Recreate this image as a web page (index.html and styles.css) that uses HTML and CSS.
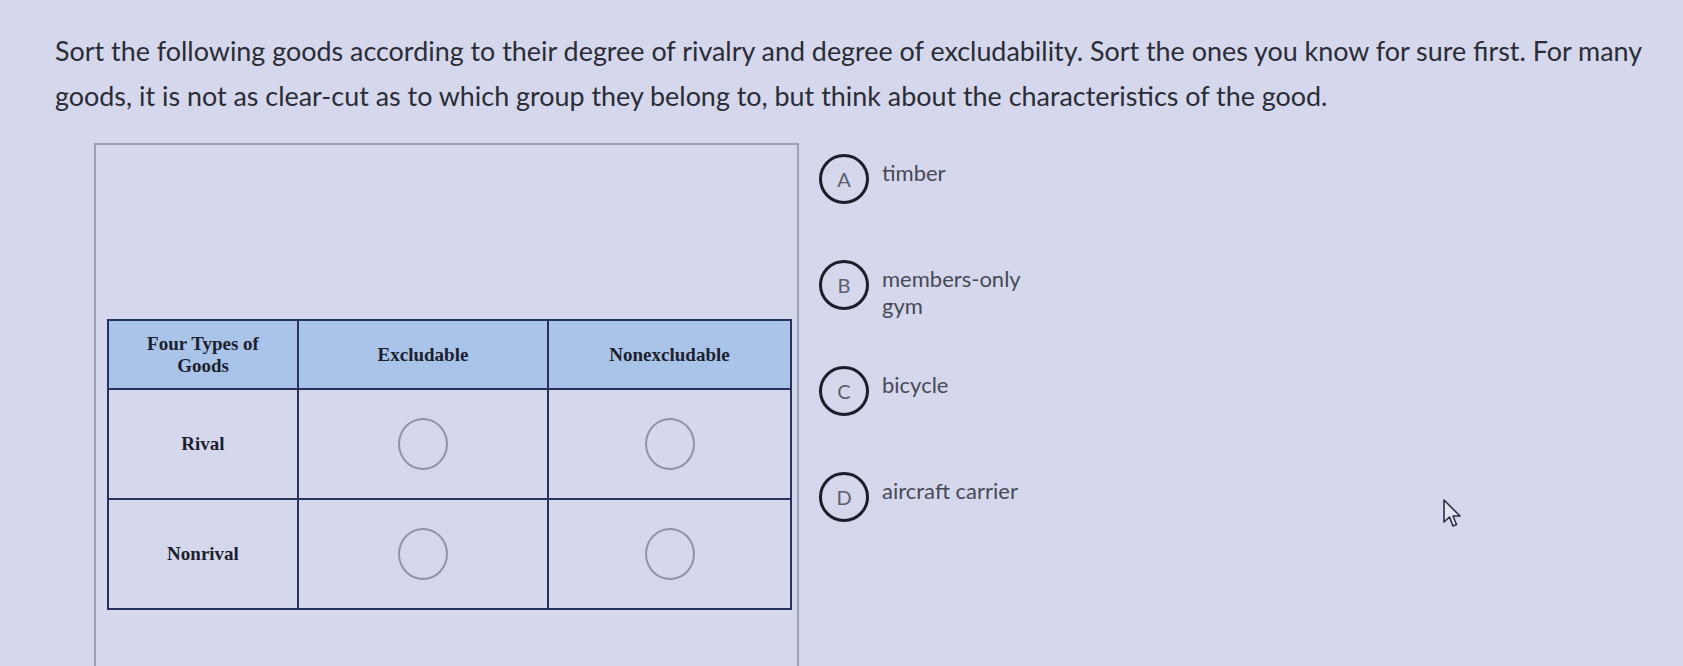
FILE: index.html
```html
<!DOCTYPE html>
<html lang="en">
<head>
  <meta charset="UTF-8">
  <meta name="viewport" content="width=device-width, initial-scale=1.0">
  <title>Four Types of Goods</title>
  <link rel="stylesheet" href="styles.css">
</head>
<body>
  <p class="prompt">Sort the following goods according to their degree of rivalry and degree of excludability. Sort the ones you know for sure first. For many goods, it is not as clear-cut as to which group they belong to, but think about the characteristics of the good.</p>
  <div class="main">
    <div class="board">
      <table class="goods">
        <tr class="headRow">
          <th class="colLabel">Four Types of<br>Goods</th>
          <th class="colEx">Excludable</th>
          <th class="colNon">Nonexcludable</th>
        </tr>
        <tr class="bodyRow">
          <td>Rival</td>
          <td><span class="drop"></span></td>
          <td><span class="drop"></span></td>
        </tr>
        <tr class="bodyRow">
          <td>Nonrival</td>
          <td><span class="drop"></span></td>
          <td><span class="drop"></span></td>
        </tr>
      </table>
    </div>
    <div class="options">
      <div class="option">
        <span class="letter">A</span>
        <span class="label">timber</span>
      </div>
      <div class="option">
        <span class="letter">B</span>
        <span class="label">members-only<br>gym</span>
      </div>
      <div class="option">
        <span class="letter">C</span>
        <span class="label">bicycle</span>
      </div>
      <div class="option">
        <span class="letter">D</span>
        <span class="label">aircraft carrier</span>
      </div>
    </div>
  </div>
  <!-- mouse pointer over the page -->
  <svg class="pointer" width="22" height="32" viewBox="0 0 22 32">
    <path d="M2 2 L2 24 L7.5 19 L11 28 L14.5 26.5 L11 18 L18 18 Z" fill="#e2e4f2" stroke="#2e3145" stroke-width="1.6" stroke-linejoin="round"/>
  </svg>
</body>
</html>
```

FILE: styles.css
```css
body{
  margin: 0;
  background-color: #d5d8ec;
  font-family: Lato, "Open Sans", sans-serif;
  height: 666px;
  overflow: hidden;
  position: relative;
}
.prompt{
  margin: 0;
  padding: 28px 20px 0 55px;
  font-size: 26.9px;
  line-height: 45px;
  color: #2b2c35;
}
.main{
  display: flex;
  margin-top: 25px;
}
.board{
  margin-left: 94px;
  width: 705px;
  height: 523px;
  border: 2px solid #9ba1bb;
  border-bottom: none;
  padding: 174px 0 0 11px;
  box-sizing: border-box;
}
.goods{
  border-collapse: collapse;
  width: 685px;
  font-family: "Liberation Serif", serif;
  font-weight: bold;
  font-size: 19px;
  color: #1d1f2e;
}
.goods th, .goods td{
  border: 2px solid #28315e;
  text-align: center;
  padding: 0;
}
.headRow{
  height: 69px;
  background-color: #aac4e9;
}
.headRow th{
  line-height: 22px;
}
.colLabel{
  width: 188px;
}
.colEx{
  width: 248px;
}
.bodyRow{
  height: 110px;
}
.drop{
  display: inline-block;
  width: 46px;
  height: 48px;
  border: 2px solid #8e92ad;
  border-radius: 50%;
  vertical-align: middle;
}
.options{
  margin-left: 20px;
  padding-top: 11px;
}
.option{
  display: flex;
  align-items: flex-start;
  height: 106px;
}
.letter{
  width: 44px;
  height: 44px;
  border: 3px solid #1c1d2b;
  border-radius: 50%;
  display: flex;
  align-items: center;
  justify-content: center;
  font-size: 20px;
  color: #5c5e6c;
  flex-shrink: 0;
}
.label{
  margin-left: 13px;
  padding-top: 5px;
  font-size: 22px;
  line-height: 27px;
  color: #474955;
}
.pointer{
  position: absolute;
  left: 1442px;
  top: 498px;
}
```
